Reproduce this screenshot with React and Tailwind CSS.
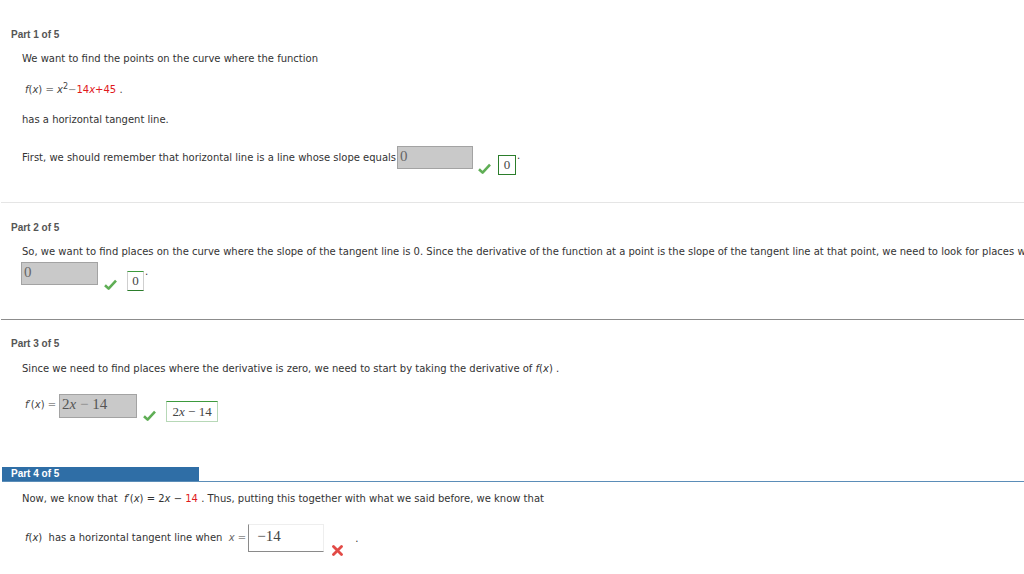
import React from "react";

const Check = () => (
  <svg width="13" height="11" viewBox="0 0 13 11" className="block">
    <path d="M1 6.2 L4.6 9.6 L12 1.6" fill="none" stroke="#5fae55" strokeWidth="2.6" strokeLinejoin="round" />
  </svg>
);

const Cross = () => (
  <svg width="11" height="11" viewBox="0 0 11 11" className="block">
    <path d="M1.5 1.5 L9.5 9.5 M9.5 1.5 L1.5 9.5" stroke="#e24a46" strokeWidth="2.8" strokeLinecap="round" />
  </svg>
);

const Heading = ({ children }) => (
  <div className="ml-[11px] h-[14px] text-[10px] leading-[14px] font-bold text-[#555]" style={{ fontFamily: '"Liberation Sans", Arial, sans-serif' }}>
    {children}
  </div>
);

const serif = { fontFamily: '"Liberation Serif", "Times New Roman", serif' };

const App = () => {
  return (
    <div
      className="w-[1024px] h-[574px] overflow-hidden bg-white text-[10px] leading-[14px] text-[#333]"
      style={{ fontFamily: '"DejaVu Sans", Verdana, sans-serif' }}
    >
      {/* Part 1 */}
      <div className="pt-[28px]">
        <Heading>Part 1 of 5</Heading>
        <p className="ml-[22px] mt-[10px]">We want to find the points on the curve where the function</p>
        <p className="ml-[25px] mt-[17px] text-[#444]">
          <i>f</i>(<i>x</i>) <span className="text-[#888]">=</span> <i>x</i>
          <sup className="text-[8px]">2</sup>
          <span className="text-[#888]">−</span>
          <span className="text-[#e0191c]">14<i>x</i>+45</span> .
        </p>
        <p className="ml-[22px] mt-[16px]">has a horizontal tangent line.</p>
        <div className="ml-[22px] mt-[19px] flex items-start">
          <span className="mt-[5px]">First, we should remember that horizontal line is a line whose slope equals</span>
          <div className="ml-[1px] w-[76px] h-[23px] bg-[#c9c9c9] border border-[#a3a3a3] pl-[2px] text-[15px] leading-[19px] text-[#666]" style={serif}>
            0
          </div>
          <div className="ml-[5px] mt-[17px]"><Check /></div>
          <div className="ml-[7px] mt-[9px] w-[18px] h-[20px] border border-[#2b7d2b] text-center text-[13px] leading-[18px] text-[#444]" style={serif}>
            0
          </div>
          <span className="mt-[3px] ml-[1px]">.</span>
        </div>
      </div>
      <div className="ml-[1px] mt-[27px] h-px bg-[#e5e5e5]" />

      {/* Part 2 */}
      <div className="pt-[18px]">
        <Heading>Part 2 of 5</Heading>
        <p className="ml-[22px] mt-[10px] whitespace-nowrap">
          So, we want to find places on the curve where the slope of the tangent line is 0. Since the derivative of the function at a point is the slope of the tangent line at that point, we need to look for places wh
        </p>
        <div className="ml-[21px] mt-[3px] flex items-start">
          <div className="w-[77px] h-[23px] bg-[#c9c9c9] border border-[#a3a3a3] pl-[2px] text-[15px] leading-[19px] text-[#666]" style={serif}>
            0
          </div>
          <div className="ml-[6px] mt-[17px]"><Check /></div>
          <div className="ml-[10px] mt-[9px] w-[17px] h-[20px] border border-[#cfcfcf] border-t-[#3d9a3d] border-b-[#2b7d2b] text-center text-[13px] leading-[18px] text-[#444]" style={serif}>
            0
          </div>
          <span className="mt-[3px] ml-[1px]">.</span>
        </div>
      </div>
      <div className="ml-[1px] mt-[28px] h-px bg-[#8c8c8c]" />

      {/* Part 3 */}
      <div className="pt-[17px]">
        <Heading>Part 3 of 5</Heading>
        <p className="ml-[22px] mt-[11px]">
          Since we need to find places where the derivative is zero, we need to start by taking the derivative of <i>f</i>(<i>x</i>) .
        </p>
        <div className="ml-[25px] mt-[18px] flex items-start">
          <span className="mt-[4px] text-[#444]">
            <i>f</i>′(<i>x</i>) <span className="text-[#999]">=</span>
          </span>
          <div className="ml-[3px] w-[78px] h-[24px] bg-[#c9c9c9] border border-[#a3a3a3] pl-[2px] text-[15px] leading-[19px] text-[#555]" style={serif}>
            2<i>x</i> <span className="text-[#888]">−</span> 14
          </div>
          <div className="ml-[6px] mt-[16px]"><Check /></div>
          <div className="ml-[10px] mt-[7px] w-[52px] h-[21px] border border-[#b7d8b7] border-t-[#3d9a3d] text-center text-[13px] leading-[19px] text-[#444]" style={serif}>
            2<i>x</i> − 14
          </div>
        </div>
      </div>

      {/* Part 4 */}
      <div className="mt-[45px]">
        <div className="ml-[2px] border-b border-[#5b8db8]">
          <div className="w-[197px] h-[14px] bg-[#2f6ea6] pl-[9px] text-[10px] leading-[14px] font-bold text-white" style={{ fontFamily: '"Liberation Sans", Arial, sans-serif' }}>
            Part 4 of 5
          </div>
        </div>
        <p className="ml-[22px] mt-[10px]">
          Now, we know that&nbsp; <i>f</i>′(<i>x</i>) = 2<i>x</i> − <span className="text-[#e0191c]">14</span> . Thus, putting this together with what we said before, we know that
        </p>
        <div className="ml-[25px] mt-[18px] flex items-start">
          <span className="mt-[7px]">
            <i>f</i>(<i>x</i>)&nbsp; has a horizontal tangent line when&nbsp; <i className="text-[#666]">x</i> <span className="text-[#999]">=</span>
          </span>
          <div className="ml-[2px] w-[76px] h-[28px] bg-white border border-[#eeeeee] border-l-[#8a8a8a] border-b-[#8a8a8a] pl-[8px] pt-[2px] text-[15px] leading-[19px] text-[#444]" style={serif}>
            −14
          </div>
          <div className="ml-[8px] mt-[21px]"><Cross /></div>
          <span className="ml-[12px] mt-[8px]">.</span>
        </div>
      </div>
    </div>
  );
};

export default App;
